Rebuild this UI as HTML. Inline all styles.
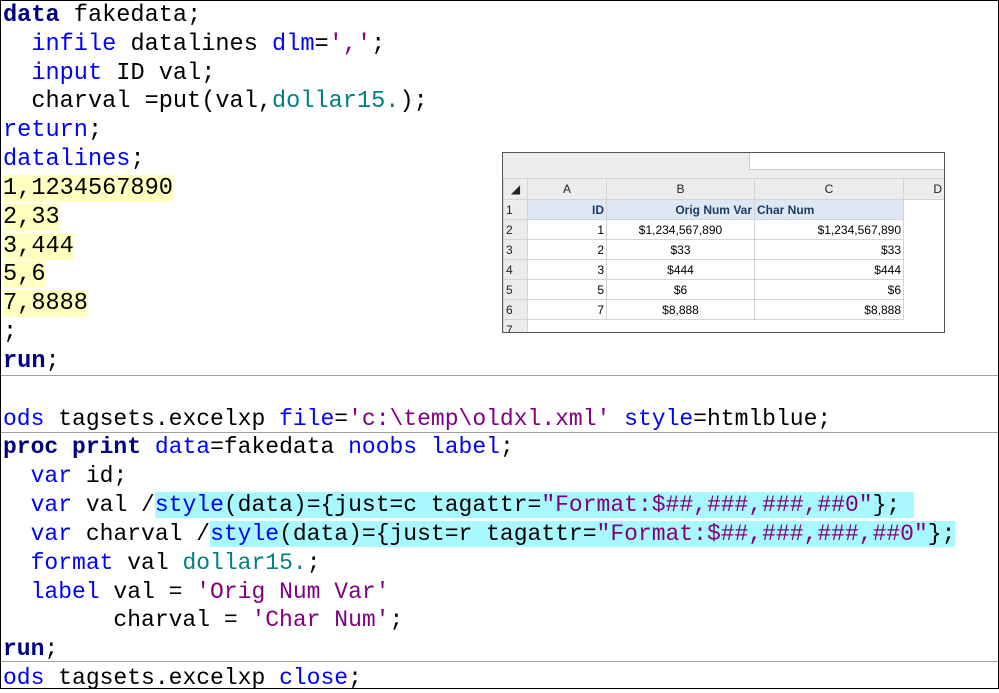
<!DOCTYPE html>
<html><head><meta charset="utf-8"><style>
body{margin:0;width:999px;height:689px;overflow:hidden;background:#fff;position:relative}
#frame{position:absolute;left:0;top:0;width:997px;height:687px;border:1px solid #000}
.code{position:absolute;left:3px;font-family:"Liberation Mono","Courier New",monospace;color:#000;line-height:28.83px}
.l{height:28.83px;white-space:pre}
.b{color:#000080;font-weight:bold}
.k{color:#0000ff}
.s{color:#800080}
.f{color:#008080}
.y{background:#ffffc0}
.c{background:#a8f8ff}
.sep{position:absolute;left:1px;width:997px;height:1px;background:#a0a0a0}
#xl{position:absolute;left:502px;top:152px;width:441px;height:179px;border:1px solid #555;background:#fff;font-family:"Liberation Sans",Arial,sans-serif;font-size:12px;overflow:hidden}
#xl .top{position:absolute;left:0;top:0;width:441px;height:25px;background:#ececec}
#xl .wbox{position:absolute;left:246px;top:0;width:195px;height:16px;background:#fff;border-left:1px solid #ccc;border-bottom:1px solid #ccc}
table{position:absolute;left:0;top:25px;border-collapse:collapse;table-layout:fixed;width:441px}
td{border:1px solid #d4d4d4;padding:0 2px;height:19px;white-space:nowrap;overflow:hidden}
.h td{background:#ececec;text-align:center;color:#222;height:20px}
td.rn{background:#ececec;text-align:left;color:#222}
.r{text-align:right}.ce{text-align:center}
.hd{background:#dde8f4;font-weight:bold;color:#1f3864}
.n{border:none}
</style></head><body>
<div id="frame"></div>
<div class="code" style="top:2px;font-size:23.6px">
<div class="l"><span class="b">data</span> fakedata;</div>
<div class="l">  <span class="k">infile</span> datalines <span class="k">dlm</span>=<span class="s">','</span>;</div>
<div class="l">  <span class="k">input</span> ID val;</div>
<div class="l">  charval =put(val,<span class="f">dollar15.</span>);</div>
<div class="l"><span class="k">return</span>;</div>
<div class="l"><span class="k">datalines</span>;</div>
<div class="l"><span class="y">1,1234567890</span></div>
<div class="l"><span class="y">2,33</span></div>
<div class="l"><span class="y">3,444</span></div>
<div class="l"><span class="y">5,6</span></div>
<div class="l"><span class="y">7,8888</span></div>
<div class="l">;</div>
<div class="l"><span class="b">run</span>;</div>
</div>
<div class="code" style="top:375.8px;font-size:23px">
<div class="l"> </div>
<div class="l"><span class="k">ods</span> tagsets.excelxp <span class="k">file</span>=<span class="s">'c:\temp\oldxl.xml'</span> <span class="k">style</span>=htmlblue;</div>
<div class="l"><span class="b">proc print</span> <span class="k">data</span>=fakedata <span class="k">noobs</span> <span class="k">label</span>;</div>
<div class="l">  <span class="k">var</span> id;</div>
<div class="l">  <span class="k">var</span> val /<span class="c"><span class="k">style</span>(data)={just=c tagattr=<span class="s">"Format:$##,###,###,##0"</span>}; </span></div>
<div class="l">  <span class="k">var</span> charval /<span class="c"><span class="k">style</span>(data)={just=r tagattr=<span class="s">"Format:$##,###,###,##0"</span>};</span></div>
<div class="l">  <span class="k">format</span> val <span class="f">dollar15.</span>;</div>
<div class="l">  <span class="k">label</span> val = <span class="s">'Orig Num Var'</span></div>
<div class="l">        charval = <span class="s">'Char Num'</span>;</div>
<div class="l"><span class="b">run</span>;</div>
<div class="l"><span class="k">ods</span> tagsets.excelxp <span class="k">close</span>;</div>
</div>
<div class="sep" style="top:375px"></div>
<div class="sep" style="top:432px"></div>
<div class="sep" style="top:661px"></div>
<div id="xl"><div class="top"><div class="wbox"></div></div>
<table>
<colgroup><col style="width:24px"><col style="width:79px"><col style="width:148px"><col style="width:149px"><col style="width:41px"></colgroup>
<tr class="h"><td>◢</td><td>A</td><td>B</td><td>C</td><td style="text-align:right">D</td></tr>
<tr><td class="rn">1</td><td class="r hd">ID</td><td class="r hd">Orig Num Var</td><td class="hd">Char Num</td><td class="n"></td></tr>
<tr><td class="rn">2</td><td class="r">1</td><td class="ce">$1,234,567,890</td><td class="r">$1,234,567,890</td><td class="n"></td></tr>
<tr><td class="rn">3</td><td class="r">2</td><td class="ce">$33</td><td class="r">$33</td><td class="n"></td></tr>
<tr><td class="rn">4</td><td class="r">3</td><td class="ce">$444</td><td class="r">$444</td><td class="n"></td></tr>
<tr><td class="rn">5</td><td class="r">5</td><td class="ce">$6</td><td class="r">$6</td><td class="n"></td></tr>
<tr><td class="rn">6</td><td class="r">7</td><td class="ce">$8,888</td><td class="r">$8,888</td><td class="n"></td></tr>
<tr><td class="rn">7</td><td class="n"></td><td class="n"></td><td class="n"></td><td class="n"></td></tr>
</table></div>
</body></html>
